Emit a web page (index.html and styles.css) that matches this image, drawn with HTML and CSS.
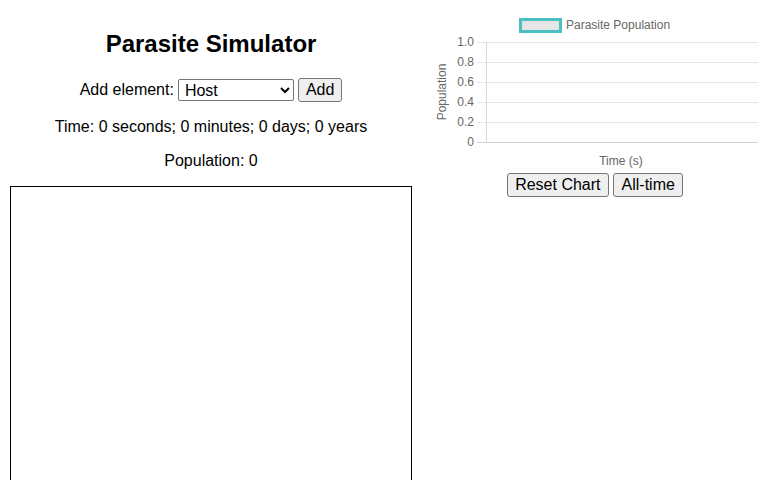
FILE: index.html
```html
<!DOCTYPE html>
<html lang="en">
<head>
    <meta charset="UTF-8">
    <title>Parasite Simulator</title>
    <link rel="stylesheet" href="styles.css">
</head>
<body>
    <div class="layout">
        <div class="sim">
            <h1>Parasite Simulator</h1>
            <div class="controls">
                <label for="element">Add element:</label>
                <select id="element">
                    <option>Host</option>
                    <option>Parasite</option>
                </select>
                <button>Add</button>
            </div>
            <p>Time: 0 seconds; 0 minutes; 0 days; 0 years</p>
            <p>Population: 0</p>
            <div class="world"></div>
        </div>
        <div class="chart-panel">
            <svg class="chart" width="326" height="163" viewBox="0 0 326 163" xmlns="http://www.w3.org/2000/svg">
                <!-- legend -->
                <rect x="88.5" y="9.5" width="40" height="12" fill="#e6e6e6" stroke="#4bc0c0" stroke-width="3"/>
                <text x="134" y="19" class="chart-text">Parasite Population</text>
                <!-- grid -->
                <g stroke="#e6e6e6" stroke-width="1">
                    <line x1="45" y1="32.5" x2="326" y2="32.5"/>
                    <line x1="45" y1="52.5" x2="326" y2="52.5"/>
                    <line x1="45" y1="72.5" x2="326" y2="72.5"/>
                    <line x1="45" y1="92.5" x2="326" y2="92.5"/>
                    <line x1="45" y1="112.5" x2="326" y2="112.5"/>
                </g>
                <line x1="45" y1="132.5" x2="326" y2="132.5" stroke="#d0d0d0"/>
                <line x1="54.5" y1="32" x2="54.5" y2="133" stroke="#d8d8d8"/>
                <!-- y ticks -->
                <g class="chart-text" text-anchor="end">
                    <text x="42" y="36">1.0</text>
                    <text x="42" y="56">0.8</text>
                    <text x="42" y="76">0.6</text>
                    <text x="42" y="96">0.4</text>
                    <text x="42" y="116">0.2</text>
                    <text x="42" y="136">0</text>
                </g>
                <text class="chart-text" text-anchor="middle" transform="translate(14 82) rotate(-90)">Population</text>
                <text class="chart-text" x="189" y="155" text-anchor="middle">Time (s)</text>
            </svg>
            <div class="chart-buttons">
                <button>Reset Chart</button>
                <button>All-time</button>
            </div>
        </div>
    </div>
</body>
</html>
```

FILE: styles.css
```css
body {
    margin: 0;
    font-family: "Liberation Sans", Arial, sans-serif;
    font-size: 16px;
    color: #000;
    background: #fff;
}
.layout {
    display: flex;
    align-items: flex-start;
}
.sim {
    width: 402px;
    padding: 0 10px;
    text-align: center;
}
h1 {
    font-size: 24px;
    margin: 30px 0 20px 0;
}
.controls {
    display: flex;
    justify-content: center;
    align-items: center;
    gap: 4px;
    height: 24px;
}
select {
    font-family: inherit;
    font-size: 16px;
    width: 116px;
    height: 22px;
    border: 1px solid #767676;
    border-radius: 2px;
    background: #fff;
    padding: 0 2px;
}
button {
    font-family: inherit;
    font-size: 16px;
    height: 24px;
    padding: 1px 7px;
    border: 1px solid #767676;
    border-radius: 3px;
    background: #efefef;
    color: #000;
}
.chart-buttons button {
    padding: 1px 7.5px;
}
.sim p {
    margin: 16px 0;
    line-height: 18px;
}
.world {
    width: 400px;
    height: 400px;
    border: 1px solid #000;
    margin-top: 16px;
}
.chart-panel {
    width: 326px;
    padding: 10px 10px 0 10px;
    text-align: center;
}
.chart {
    display: block;
}
.chart-text {
    font-family: "Liberation Sans", Arial, sans-serif;
    font-size: 12px;
    fill: #666;
}
.chart-buttons {
    display: flex;
    justify-content: center;
    gap: 4px;
}
```
